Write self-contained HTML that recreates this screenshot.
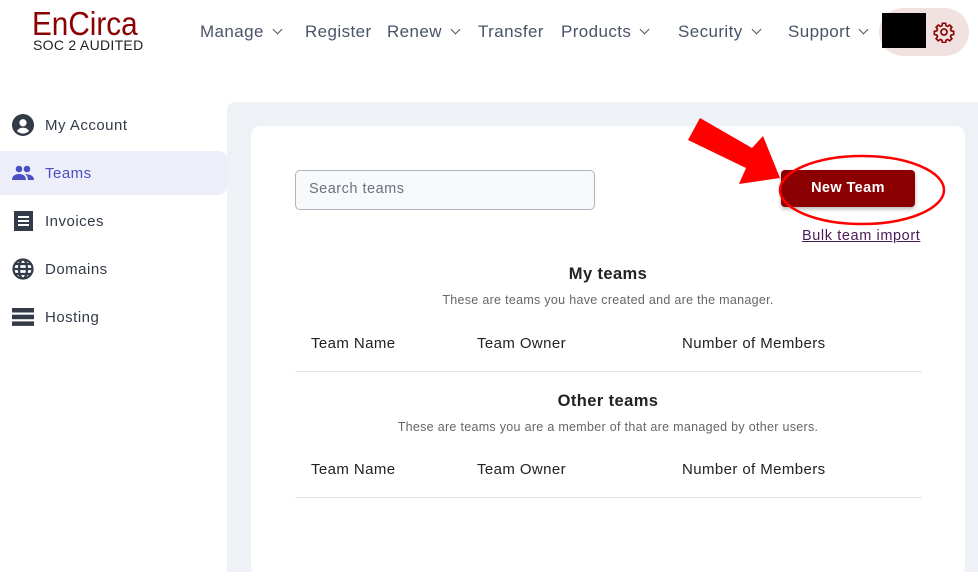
<!DOCTYPE html>
<html><head><style>
*{margin:0;padding:0;box-sizing:border-box}
body{width:978px;height:565px;overflow:hidden;background:#fff;font-family:"Liberation Sans",sans-serif;position:relative;color:#222}
.abs{position:absolute}
.nav{top:22px;font-size:17px;color:#4a5468;white-space:nowrap;letter-spacing:0.4px}
.chev{display:inline-block;width:7px;height:7px;border-right:1.6px solid #4a5468;border-bottom:1.6px solid #4a5468;transform:rotate(45deg);margin-left:10px;position:relative;top:-4px}
.side{left:45px;font-size:15px;color:#333a48;letter-spacing:0.5px}
.th{font-size:15px;color:#222;letter-spacing:0.4px}
</style></head><body>
<div class="abs" style="left:32px;top:5px;font-size:33px;color:#8b0000;transform:scaleX(0.9);transform-origin:left">EnCirca</div>
<div class="abs" style="left:33px;top:37px;font-size:14px;color:#222;letter-spacing:0.3px">SOC 2 AUDITED</div>
<div class="abs nav" style="left:200px">Manage<span class="chev"></span></div>
<div class="abs nav" style="left:305px">Register</div>
<div class="abs nav" style="left:387px">Renew<span class="chev"></span></div>
<div class="abs nav" style="left:478px">Transfer</div>
<div class="abs nav" style="left:561px">Products<span class="chev"></span></div>
<div class="abs nav" style="left:678px">Security<span class="chev"></span></div>
<div class="abs nav" style="left:788px">Support<span class="chev"></span></div>
<div class="abs" style="left:879px;top:8px;width:90px;height:48px;border-radius:24px;background:#f1e1e1"></div>
<div class="abs" style="left:882px;top:13px;width:44px;height:35px;background:#000"></div>
<svg class="abs" style="left:933px;top:21px" width="22" height="22" viewBox="0 0 24 24" fill="none" stroke="#8b0000" stroke-width="1.8"><path d="M10.3 2.5h3.4l.5 2.6 1.8.8 2.2-1.5 2.4 2.4-1.5 2.2.8 1.8 2.6.5v3.4l-2.6.5-.8 1.8 1.5 2.2-2.4 2.4-2.2-1.5-1.8.8-.5 2.6h-3.4l-.5-2.6-1.8-.8-2.2 1.5-2.4-2.4 1.5-2.2-.8-1.8-2.6-.5v-3.4l2.6-.5.8-1.8-1.5-2.2 2.4-2.4 2.2 1.5 1.8-.8z"/><circle cx="12" cy="12" r="3.3"/></svg>

<div class="abs" style="left:0;top:151px;width:227px;height:44px;background:#eeeefa;border-radius:0 8px 8px 0"></div>
<svg class="abs" style="left:12px;top:114px" width="22" height="22" viewBox="0 0 20 20"><circle cx="10" cy="10" r="10" fill="#333a48"/><circle cx="10" cy="8" r="3.3" fill="#fff"/><path d="M4.5 15.5c1.5-2.5 3.5-3 5.5-3s4 .5 5.5 3c-1.5 1.5-3.5 2.3-5.5 2.3s-4-.8-5.5-2.3z" fill="#fff"/></svg>
<div class="abs side" style="top:117px">My Account</div>
<svg class="abs" style="left:12px;top:165px" width="22" height="16" viewBox="0 0 22 16" fill="#4a4fc4"><circle cx="7" cy="4" r="3.3"/><circle cx="15" cy="4" r="3.3"/><path d="M0 15c0-4 3-6 7-6s7 2 7 6z"/><path d="M13 9.3c4 -.5 9 1 9 5.7h-6c0-2.5-1-4.5-3-5.7z"/></svg>
<div class="abs side" style="top:165px;color:#4a4fc4">Teams</div>
<svg class="abs" style="left:14px;top:211px" width="19" height="20" viewBox="0 0 19 20"><rect x="0" y="0" width="19" height="20" fill="#333a48"/><rect x="4" y="5" width="11" height="2" fill="#fff"/><rect x="4" y="9" width="11" height="2" fill="#fff"/><rect x="4" y="13" width="11" height="2" fill="#fff"/></svg>
<div class="abs side" style="top:213px">Invoices</div>
<svg class="abs" style="left:12px;top:258px" width="22" height="22" viewBox="0 0 22 22" fill="none" stroke="#333a48" stroke-width="2.2"><circle cx="11" cy="11" r="9.5"/><ellipse cx="11" cy="11" rx="4" ry="9.5"/><path d="M1.5 11h19M3 6h16M3 16h16"/></svg>
<div class="abs side" style="top:261px">Domains</div>
<svg class="abs" style="left:12px;top:308px" width="22" height="18" viewBox="0 0 22 18" fill="#333a48"><rect y="0" width="22" height="4.5"/><rect y="6.7" width="22" height="4.5"/><rect y="13.4" width="22" height="4.5"/></svg>
<div class="abs side" style="top:309px">Hosting</div>

<div class="abs" style="left:227px;top:102px;width:760px;height:470px;background:#eef1f5;border-radius:8px 0 0 0"></div>
<div class="abs" style="left:251px;top:126px;width:714px;height:450px;background:#fff;border-radius:10px"></div>
<div class="abs" style="left:295px;top:170px;width:300px;height:40px;border:1px solid #aeb4bd;border-radius:5px;background:#f8f9fb;font-size:14.5px;letter-spacing:0.5px;color:#6b7280;padding:10px 13px">Search teams</div>
<div class="abs" style="left:781px;top:170px;width:134px;height:37px;background:#8b0000;border-radius:4px;color:#fff;font-weight:bold;font-size:14.5px;letter-spacing:0.4px;text-align:center;line-height:37px;box-shadow:0 2px 4px rgba(0,0,0,.3)">New Team</div>
<div class="abs" style="left:802px;top:228px;font-size:14.5px;letter-spacing:0.6px;color:#4b1a5a;text-decoration:underline">Bulk team import</div>
<svg class="abs" style="left:0;top:0" width="978" height="565"><ellipse cx="862" cy="190" rx="82" ry="34" fill="none" stroke="#f00" stroke-width="2.5"/><polygon points="700,118 752,148 763,136 780,178 739,184 746,168 688,140" fill="#f00"/></svg>

<div class="abs" style="left:251px;width:714px;top:265px;text-align:center;font-size:16.5px;letter-spacing:0.4px;font-weight:bold;color:#222">My teams</div>
<div class="abs" style="left:251px;width:714px;top:293px;text-align:center;font-size:12.5px;letter-spacing:0.3px;color:#666">These are teams you have created and are the manager.</div>
<div class="abs th" style="left:311px;top:335px">Team Name</div>
<div class="abs th" style="left:477px;top:335px">Team Owner</div>
<div class="abs th" style="left:682px;top:335px">Number of Members</div>
<div class="abs" style="left:295px;top:371px;width:627px;height:1px;background:#e3e5e8"></div>
<div class="abs" style="left:251px;width:714px;top:392px;text-align:center;font-size:16.5px;letter-spacing:0.4px;font-weight:bold;color:#222">Other teams</div>
<div class="abs" style="left:251px;width:714px;top:420px;text-align:center;font-size:12.5px;letter-spacing:0.3px;color:#666">These are teams you are a member of that are managed by other users.</div>
<div class="abs th" style="left:311px;top:461px">Team Name</div>
<div class="abs th" style="left:477px;top:461px">Team Owner</div>
<div class="abs th" style="left:682px;top:461px">Number of Members</div>
<div class="abs" style="left:295px;top:497px;width:627px;height:1px;background:#e3e5e8"></div>
</body></html>
